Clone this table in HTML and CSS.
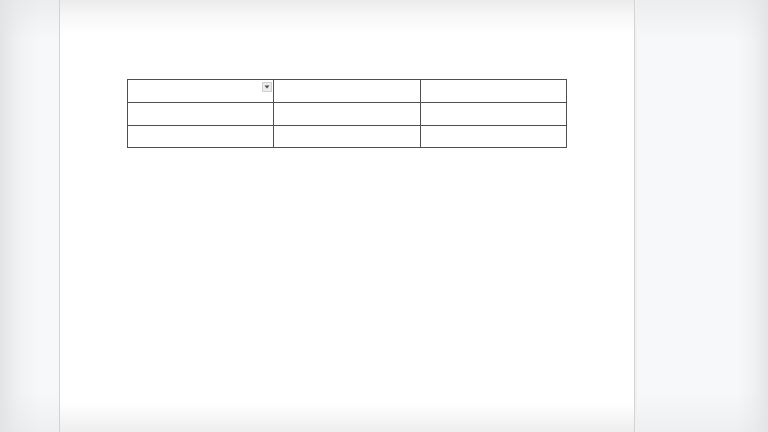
FILE: index.html
```html
<!DOCTYPE html>
<html>
<head>
<meta charset="utf-8">
<link rel="stylesheet" href="styles.css">
</head>
<body>
<div class="workspace">
  <div class="gutter gutter-left"></div>
  <div class="page">
    <div class="page-content">
      <table class="doc-table">
        <tr><td class="first"><span class="cell-menu"><svg width="8" height="8" viewBox="0 0 8 8"><path d="M1.5 2.5h5L4 5.5z" fill="#4a4a4a"/></svg></span></td><td></td><td></td></tr>
        <tr><td></td><td></td><td></td></tr>
        <tr><td></td><td></td><td></td></tr>
      </table>
    </div>
  </div>
  <div class="gutter gutter-right"></div>
</div>
</body>
</html>
```
FILE: styles.css
```css
html, body {
  margin: 0;
  padding: 0;
  width: 768px;
  height: 432px;
  overflow: hidden;
  font-family: "Liberation Sans", Arial, sans-serif;
}
.workspace {
  display: flex;
  height: 432px;
  background: #f6f7f9;
}
.gutter {
  height: 432px;
}
.gutter-left {
  width: 59px;
  background:
    linear-gradient(to bottom, rgba(225,226,228,0.5) 0, rgba(225,226,228,0) 40px, rgba(225,226,228,0) 392px, rgba(225,226,228,0.4) 432px),
    linear-gradient(to right, #e3e4e5 0, #eff1f2 18px, #f6f8f9 40px, #f6f8f9 59px);
}
.gutter-right {
  flex: 1;
  border-left: 2px solid #f0f1f3;
  background:
    linear-gradient(to bottom, rgba(225,226,228,0.5) 0, rgba(225,226,228,0) 40px, rgba(225,226,228,0) 392px, rgba(225,226,228,0.4) 432px),
    linear-gradient(to right, #f7f8fa 0, #f7f8fa 100px, #eff0f2 118px, #e3e4e6 132px);
}
.page {
  width: 574px;
  height: 432px;
  border-left: 1px solid #d2d3d5;
  border-right: 1px solid #d2d3d5;
  background: linear-gradient(to bottom, #ebebeb 0, #f6f6f6 14px, #ffffff 34px, #ffffff 404px, #f6f6f6 418px, #eeeeee 432px);
}
.page-content {
  padding: 79px 0 0 67px;
}
.doc-table {
  border-collapse: collapse;
  width: 440px;
  table-layout: fixed;
}
.doc-table td {
  border: 1px solid #4f4f4f;
  height: 22px;
  padding: 0;
  position: relative;
}
.doc-table tr:nth-child(3) td {
  height: 21px;
}
.doc-table tr + tr td {
  border-top-color: #7a7a7a;
}
.cell-menu {
  position: absolute;
  right: 1px;
  top: 2px;
  width: 10px;
  height: 10px;
  background: #ececec;
  border: 1px solid #d0d0d0;
  box-sizing: border-box;
  display: flex;
  align-items: center;
  justify-content: center;
}
.cell-menu svg {
  display: block;
}
```
